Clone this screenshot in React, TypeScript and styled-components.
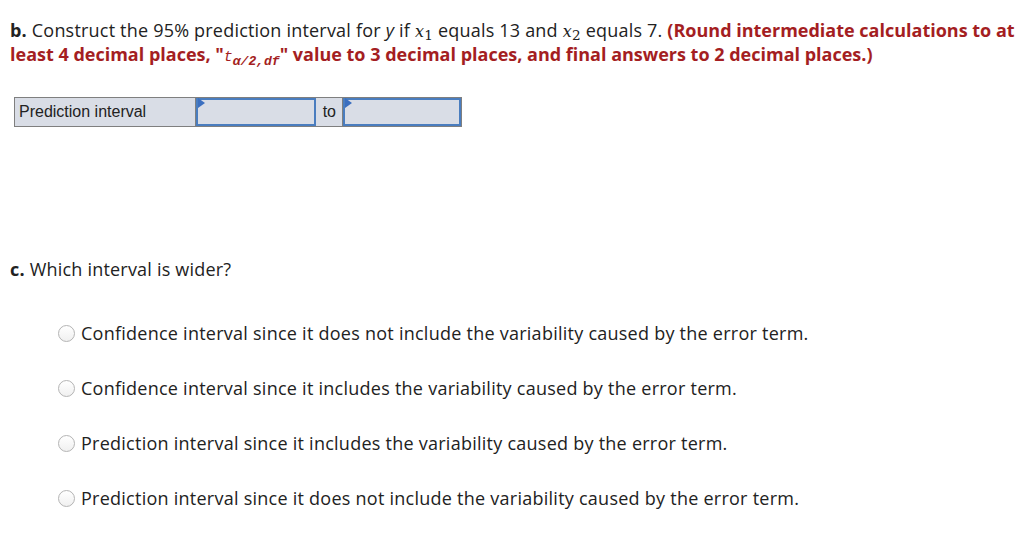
import React from "react";
import styled, { createGlobalStyle } from "styled-components";

const GlobalStyle = createGlobalStyle`
  html, body {
    margin: 0;
    padding: 0;
    background: #fff;
  }
  body {
    font-family: "Open Sans", "Liberation Sans", sans-serif;
    color: #222;
  }
`;

const Page = styled.div`
  padding: 18px 6px 0 10px;
  font-size: 18px;
  line-height: 24px;
  letter-spacing: 0.2px;
`;

const Paragraph = styled.p`
  margin: 0;
`;

const Red = styled.strong`
  color: #a41e22;
  font-weight: 700;
  letter-spacing: 0;
`;

const MathVar = styled.i`
  font-family: "DejaVu Serif", "Liberation Serif", serif;
  font-style: italic;
  font-size: 16px;
  line-height: 0;
`;

const Sub = styled.sub`
  font-style: normal;
  font-size: 0.85em;
  vertical-align: -3px;
  line-height: 0;
`;

const Mono = styled.span`
  font-family: "Liberation Mono", monospace;
  font-style: italic;
  font-weight: 400;
  font-size: 15px;
  line-height: 0;
`;

const MonoSub = styled.sub`
  font-size: 13px;
  vertical-align: -4px;
  line-height: 0;
  font-weight: 700;
`;

const Table = styled.div`
  display: flex;
  margin: 31px 0 0 4px;
  width: 448px;
  height: 30px;
  border: 1px solid #7f7f7f;
  box-sizing: border-box;
  background: #d9dde6;
  font-family: "Liberation Sans", Arial, sans-serif;
  font-size: 16px;
  letter-spacing: 0;
  color: #222;
`;

const Cell = styled.div<{ $width: number }>`
  width: ${(p) => p.$width}px;
  display: flex;
  align-items: center;
  justify-content: ${(p) => (p.$width < 40 ? "center" : "flex-start")};
  padding-left: ${(p) => (p.$width < 40 ? 0 : 4)}px;
  box-sizing: border-box;
  border-right: 1px solid #7f7f7f;
  &:last-child {
    border-right: none;
  }
`;

const InputCell = styled.div<{ $width: number }>`
  position: relative;
  width: ${(p) => p.$width}px;
  box-sizing: border-box;
  border: 2px solid #4a7dbf;
  background: #d9dde6;
  &::before {
    content: "";
    position: absolute;
    left: 0;
    top: 0;
    border-top: 5px solid transparent;
    border-bottom: 5px solid transparent;
    border-left: 7px solid #3b6fc0;
    transform: translateY(-2px);
  }
`;

const SectionC = styled(Paragraph)`
  margin-top: 130px;
`;

const Options = styled.div`
  display: flex;
  flex-direction: column;
  gap: 31px;
  margin: 40px 0 0 48px;
  letter-spacing: 0.25px;
`;

const Option = styled.label`
  display: flex;
  align-items: center;
  gap: 6px;
  line-height: 24px;
`;

const Radio = styled.span`
  width: 17px;
  height: 17px;
  border-radius: 50%;
  border: 1px solid #b4b4b4;
  box-sizing: border-box;
  background: linear-gradient(#fff, #f0f0f0);
  flex-shrink: 0;
`;

const options = [
  "Confidence interval since it does not include the variability caused by the error term.",
  "Confidence interval since it includes the variability caused by the error term.",
  "Prediction interval since it includes the variability caused by the error term.",
  "Prediction interval since it does not include the variability caused by the error term.",
];

export default function App() {
  return (
    <>
      <GlobalStyle />
      <Page>
        <Paragraph>
          <b>b.</b> Construct the 95% prediction interval for <i>y</i> if{" "}
          <MathVar>
            x<Sub>1</Sub>
          </MathVar>{" "}
          equals 13 and{" "}
          <MathVar>
            x<Sub>2</Sub>
          </MathVar>{" "}
          equals 7.{" "}
          <Red>
            (Round intermediate calculations to at least 4 decimal places, "
            <Mono>
              t<MonoSub>α/2,df</MonoSub>
            </Mono>
            " value to 3 decimal places, and final answers to 2 decimal
            places.)
          </Red>
        </Paragraph>

        <Table>
          <Cell $width={181}>Prediction interval</Cell>
          <InputCell $width={121} />
          <Cell $width={27}>to</Cell>
          <InputCell $width={118} />
        </Table>

        <SectionC>
          <b>c.</b> Which interval is wider?
        </SectionC>

        <Options>
          {options.map((o) => (
            <Option key={o}>
              <Radio />
              {o}
            </Option>
          ))}
        </Options>
      </Page>
    </>
  );
}
